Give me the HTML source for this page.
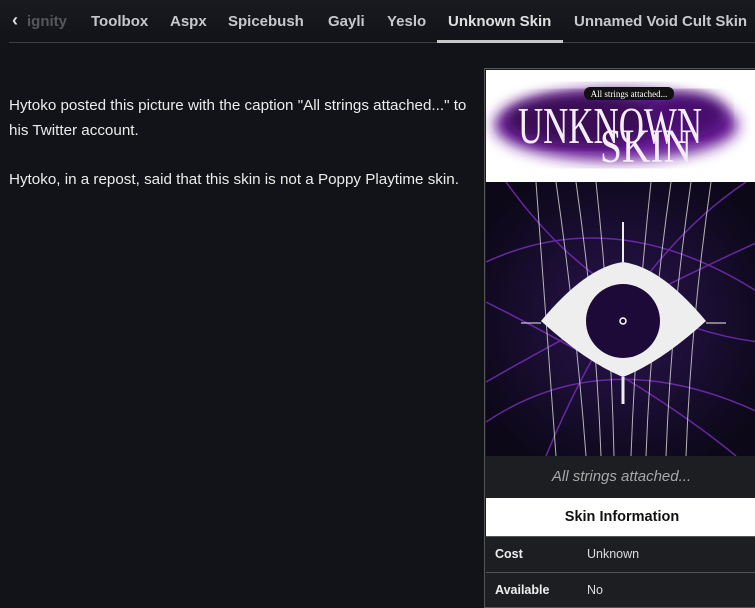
<!DOCTYPE html>
<html><head><style>
*{margin:0;padding:0;box-sizing:border-box}
body{width:755px;height:596px;overflow:hidden;background:#121318;font-family:"Liberation Sans",sans-serif;color:#e6e6e6;position:relative}
.tabs{position:absolute;left:0;top:0;width:755px;height:43px;background:linear-gradient(#181a20,#121318)}
.tabs span{position:absolute;top:13px;font-size:15px;font-weight:bold;color:#c8c8cc;white-space:nowrap}
.line{position:absolute;left:9px;top:42px;width:746px;height:1px;background:#3c3e44}
.active{position:absolute;left:437px;top:40px;width:126px;height:3px;background:#c8c8c8}
p{position:absolute;left:9px;font-size:15.2px;color:#ececec;line-height:25px}
.box{position:absolute;left:484px;top:68px;width:275px;height:540px;border:1px solid #555;background:#1d1e22}
.logo{position:absolute;left:1px;top:1px;width:272px;height:112px;background:#fff;overflow:hidden}
.cap{position:absolute;left:0;top:399px;width:273px;text-align:center;font-style:italic;font-size:15px;color:#a8a8a8}
.hdr{position:absolute;left:1px;top:429px;width:272px;height:38px;background:#fff;color:#111;font-weight:bold;font-size:14.5px;text-align:center;line-height:38px}
.row{position:absolute;left:1px;width:272px;height:36px;border-top:1px solid #555;font-size:12.5px}
.row b{position:absolute;left:9px;top:10px;color:#eee}
.row i{position:absolute;left:101px;top:10px;font-style:normal;color:#ddd}
</style></head><body>
<div class="tabs">
<span style="left:12px;color:#ddd;font-size:18px;top:10px">‹</span>
<span style="left:27px;color:#55575c">ignity</span>
<span style="left:91px">Toolbox</span>
<span style="left:170px">Aspx</span>
<span style="left:228px">Spicebush</span>
<span style="left:328px">Gayli</span>
<span style="left:387px">Yeslo</span>
<span style="left:448px;color:#e0e0e0">Unknown Skin</span>
<span style="left:574px">Unnamed Void Cult Skin</span>
</div>
<div class="line"></div><div class="active"></div>
<p style="top:93px">Hytoko posted this picture with the caption "All strings attached..." to<br>his Twitter account.</p>
<p style="top:167px">Hytoko, in a repost, said that this skin is not a Poppy Playtime skin.</p>
<div class="box">
<div class="logo">
<svg width="272" height="112">
<defs><filter id="b"><feGaussianBlur stdDeviation="7"/></filter></defs>
<ellipse cx="130" cy="55" rx="122" ry="36" fill="#6a1f9a" filter="url(#b)"/>
<ellipse cx="100" cy="50" rx="80" ry="26" fill="#3a0a55" filter="url(#b)"/>
<ellipse cx="200" cy="45" rx="40" ry="22" fill="#4a1070" filter="url(#b)"/>
<rect x="98" y="17" width="90" height="13" rx="6" fill="#111"/>
<text x="143" y="27" font-family="Liberation Serif" font-size="9" fill="#fff" text-anchor="middle">All strings attached...</text>
<text x="32" y="73" font-family="Liberation Serif" font-size="52" fill="#f4eef8" textLength="184" lengthAdjust="spacingAndGlyphs">UNKNOWN</text>
<text x="114" y="92" font-family="Liberation Serif" font-size="48" fill="#f4eef8" textLength="92" lengthAdjust="spacingAndGlyphs">SKIN</text>
</svg>
</div>
<div style="position:absolute;left:1px;top:113px;width:272px;height:274px;background:#140a26;overflow:hidden">
<svg width="272" height="274">
<defs><radialGradient id="g" cx="50%" cy="50%" r="60%"><stop offset="0" stop-color="#2a1450"/><stop offset="1" stop-color="#0c0818"/></radialGradient></defs>
<rect width="272" height="274" fill="url(#g)"/>
<g stroke="#7a30c0" stroke-width="1.5" fill="none" opacity=".8">
<path d="M0 80 Q130 20 272 110"/><path d="M0 200 Q140 120 272 60"/><path d="M0 240 Q120 160 272 230"/><path d="M20 0 Q120 140 272 160"/><path d="M0 120 Q160 200 250 274"/><path d="M60 274 Q140 80 260 0"/></g>
<g stroke="#ddd" stroke-width="1" fill="none" opacity=".8">
<path d="M50 0 Q60 140 70 274"/><path d="M70 0 Q90 140 100 274"/><path d="M90 0 Q110 140 115 274"/><path d="M110 0 Q125 140 128 274"/><path d="M165 0 Q150 140 145 274"/><path d="M185 0 Q165 140 160 274"/><path d="M205 0 Q185 140 180 274"/><path d="M225 0 Q205 140 200 274"/></g>
<path d="M55 139 Q100 85 137 80 Q175 85 220 139 Q175 180 137 195 Q100 180 55 139Z" fill="#eee"/>
<line x1="137" y1="40" x2="137" y2="80" stroke="#eee" stroke-width="2"/>
<line x1="137" y1="195" x2="137" y2="222" stroke="#eee" stroke-width="3"/>
<line x1="35" y1="141" x2="55" y2="141" stroke="#eee"/><line x1="220" y1="141" x2="240" y2="141" stroke="#eee"/>
<circle cx="137" cy="139" r="37" fill="#1e0a38"/>
<circle cx="137" cy="139" r="3" fill="none" stroke="#fff" stroke-width="1.5"/>
</svg>
</div>
<div class="cap">All strings attached...</div>
<div class="hdr">Skin Information</div>
<div class="row" style="top:467px"><b>Cost</b><i>Unknown</i></div>
<div class="row" style="top:503px"><b>Available</b><i>No</i></div>
</div>
</body></html>
